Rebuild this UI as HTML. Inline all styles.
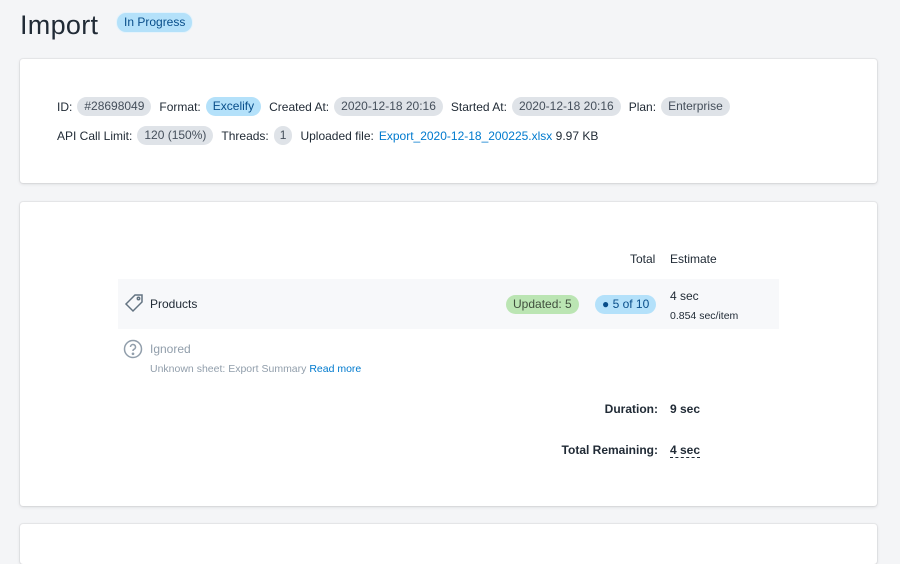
<!DOCTYPE html><html><head><style>
body{margin:0;width:900px;height:535px;background:#f4f5f7;font-family:"Liberation Sans",sans-serif;font-size:12px;color:#212b36;overflow:hidden;position:relative}
.a{position:absolute;white-space:nowrap}
.card{position:absolute;left:20px;width:857px;background:#fff;border-radius:3px;box-shadow:0 0 0 1px rgba(63,63,68,.06),0 1px 3px rgba(63,63,68,.15)}
.b{display:inline-block;background:#dfe3e8;border-radius:10px;padding:2px 7px;color:#454f5b;line-height:15px}
.bl{background:#b4e1fa;color:#084e8a}
.bg{background:#bbe5b3;color:#414f3e}
a{color:#007ace;text-decoration:none}
.row{display:flex;align-items:center;gap:0}
.row span.l{margin-right:5px}
.row span.b{margin-right:8px}
</style></head><body>
<div class="a" style="left:20px;top:10px;font-size:27px;color:#212b36;letter-spacing:.3px">Import</div>
<div class="a" style="left:116px;top:12px"><span class="b bl" style="padding:2px 7px;border:1px solid #e6f3fb">In Progress</span></div>
<div class="card" style="top:59px;height:124px">
<div class="a row" style="left:37px;top:38px"><span class="l">ID:</span><span class="b">#28698049</span><span class="l">Format:</span><span class="b bl">Excelify</span><span class="l">Created At:</span><span class="b">2020-12-18 20:16</span><span class="l">Started At:</span><span class="b">2020-12-18 20:16</span><span class="l">Plan:</span><span class="b">Enterprise</span></div>
<div class="a row" style="left:37px;top:67px"><span class="l">API Call Limit:</span><span class="b">120 (150%)</span><span class="l">Threads:</span><span class="b" style="padding:2px 6px">1</span><span class="l">Uploaded file:</span><a>Export_2020-12-18_200225.xlsx</a>&nbsp;9.97 KB</div>
</div>
<div class="card" style="top:202px;height:304px">
<div class="a" style="left:610px;top:50px">Total</div>
<div class="a" style="left:650px;top:50px">Estimate</div>
<div class="a" style="left:98px;top:77px;width:661px;height:50px;background:#f7f8fa"></div>
<svg class="a" style="left:104px;top:91px" width="20" height="20" viewBox="0 0 20 20" fill="none" stroke="#637381" stroke-width="1.5"><path d="M11 2h7v7L9 18 2 11z"/><circle cx="14.5" cy="5.5" r="1.2"/></svg>
<div class="a" style="left:130px;top:95px">Products</div>
<div class="a" style="left:486px;top:93px"><span class="b bg">Updated: 5</span></div>
<div class="a" style="left:575px;top:93px"><span class="b bl">● 5 of 10</span></div>
<div class="a" style="left:650px;top:87px">4 sec</div>
<div class="a" style="left:650px;top:108px;font-size:10.5px">0.854 sec/item</div>
<svg class="a" style="left:103px;top:137px" width="20" height="20" viewBox="0 0 20 20" fill="none" stroke="#919eab" stroke-width="1.5"><circle cx="10" cy="10" r="8.5"/><path d="M7.5 8a2.5 2.5 0 1 1 3.5 2.3c-.7.3-1 .8-1 1.5V12"/><circle cx="10" cy="14.8" r=".6" fill="#919eab"/></svg>
<div class="a" style="left:130px;top:140px;color:#919eab">Ignored</div>
<div class="a" style="left:130px;top:161px;font-size:10.5px;color:#919eab">Unknown sheet: Export Summary <a>Read more</a></div>
<div class="a" style="right:219px;top:200px;font-weight:bold">Duration:</div>
<div class="a" style="left:650px;top:200px;font-weight:bold">9 sec</div>
<div class="a" style="right:219px;top:241px;font-weight:bold">Total Remaining:</div>
<div class="a" style="left:650px;top:241px;font-weight:bold;border-bottom:1px dashed #212b36">4 sec</div>
</div>
<div class="card" style="top:524px;height:40px"></div>
</body></html>
